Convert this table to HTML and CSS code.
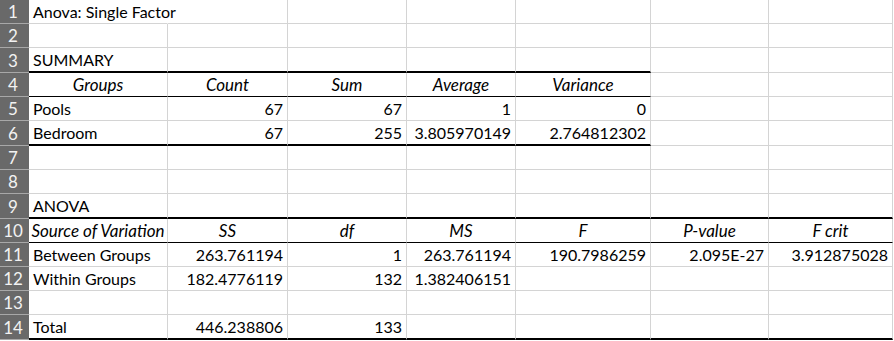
FILE: index.html
```html
<!DOCTYPE html>
<html>
<head>
<meta charset="utf-8">
<link rel="stylesheet" href="styles.css">
</head>
<body>
<div class="sheet">
  <div class="row"><div class="h">1</div><div class="c nr">Anova: Single Factor</div><div class="c"></div><div class="c"></div><div class="c"></div><div class="c"></div><div class="c"></div><div class="c"></div></div>
  <div class="row"><div class="h">2</div><div class="c"></div><div class="c"></div><div class="c"></div><div class="c"></div><div class="c"></div><div class="c"></div><div class="c"></div></div>
  <div class="row tall"><div class="h">3</div><div class="c tb">SUMMARY</div><div class="c tb"></div><div class="c tb"></div><div class="c tb"></div><div class="c tb"></div><div class="c"></div><div class="c"></div></div>
  <div class="row"><div class="h">4</div><div class="c m i b1">Groups</div><div class="c m i b1">Count</div><div class="c m i b1">Sum</div><div class="c m i b1">Average</div><div class="c m i b1">Variance</div><div class="c"></div><div class="c"></div></div>
  <div class="row"><div class="h">5</div><div class="c">Pools</div><div class="c r">67</div><div class="c r">67</div><div class="c r">1</div><div class="c r">0</div><div class="c"></div><div class="c"></div></div>
  <div class="row tall"><div class="h">6</div><div class="c tb">Bedroom</div><div class="c r tb">67</div><div class="c r tb">255</div><div class="c r tb">3.805970149</div><div class="c r tb">2.764812302</div><div class="c"></div><div class="c"></div></div>
  <div class="row"><div class="h">7</div><div class="c"></div><div class="c"></div><div class="c"></div><div class="c"></div><div class="c"></div><div class="c"></div><div class="c"></div></div>
  <div class="row"><div class="h">8</div><div class="c"></div><div class="c"></div><div class="c"></div><div class="c"></div><div class="c"></div><div class="c"></div><div class="c"></div></div>
  <div class="row tall"><div class="h">9</div><div class="c tb">ANOVA</div><div class="c tb"></div><div class="c tb"></div><div class="c tb"></div><div class="c tb"></div><div class="c tb"></div><div class="c tb"></div></div>
  <div class="row"><div class="h">10</div><div class="c m i b1 tight">Source of Variation</div><div class="c m i b1">SS</div><div class="c m i b1">df</div><div class="c m i b1">MS</div><div class="c m i b1">F</div><div class="c m i b1">P-value</div><div class="c m i b1">F crit</div></div>
  <div class="row"><div class="h">11</div><div class="c">Between Groups</div><div class="c r">263.761194</div><div class="c r">1</div><div class="c r">263.761194</div><div class="c r">190.7986259</div><div class="c r">2.095E-27</div><div class="c r">3.912875028</div></div>
  <div class="row"><div class="h">12</div><div class="c">Within Groups</div><div class="c r">182.4776119</div><div class="c r">132</div><div class="c r">1.382406151</div><div class="c"></div><div class="c"></div><div class="c"></div></div>
  <div class="row"><div class="h">13</div><div class="c"></div><div class="c"></div><div class="c"></div><div class="c"></div><div class="c"></div><div class="c"></div><div class="c"></div></div>
  <div class="row tall"><div class="h">14</div><div class="c tb">Total</div><div class="c r tb">446.238806</div><div class="c r tb">133</div><div class="c tb"></div><div class="c tb"></div><div class="c tb"></div><div class="c tb"></div></div>
</div>
</body>
</html>
```

FILE: styles.css
```css
html, body {
  margin: 0;
  padding: 0;
  background: #ffffff;
}
.sheet {
  display: flex;
  flex-direction: column;
  width: 894px;
  font-family: Lato, "Open Sans", sans-serif;
  font-size: 16px;
  color: #000000;
}
.row {
  display: grid;
  grid-template-columns: 29px 139px 120px 119px 109px 135px 118px 124px;
  height: 24px;
}
.row.tall {
  height: 25px;
}
.h {
  box-sizing: border-box;
  background: #696969;
  color: #f2f2f2;
  border-bottom: 1px solid #a8a8a8;
  display: flex;
  align-items: flex-end;
  justify-content: center;
  padding: 0 3px 2px 0;
  line-height: 18px;
  font-size: 17px;
}
.c {
  box-sizing: border-box;
  border-right: 1px solid #d4d4d4;
  border-bottom: 1px solid #d4d4d4;
  display: flex;
  align-items: flex-end;
  padding: 0 4px 2px 4px;
  line-height: 18px;
  white-space: nowrap;
  overflow: visible;
}
.c.nr {
  border-right-color: transparent;
}
.c.r {
  justify-content: flex-end;
}
.c.m {
  justify-content: center;
}
.c.i {
  font-style: italic;
  font-size: 17px;
}
.c.tight {
  padding-left: 0;
  padding-right: 0;
}
.c.b1 {
  border-bottom: 1px solid #000000;
}
.c.tb {
  border-bottom: 2px solid #000000;
}
```
